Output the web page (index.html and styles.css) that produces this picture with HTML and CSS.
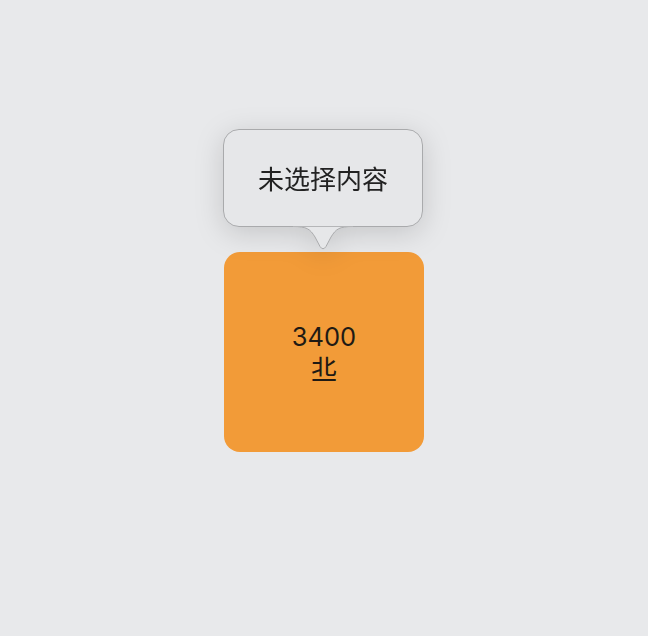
FILE: index.html
```html
<!DOCTYPE html>
<html lang="zh">
<head>
<meta charset="utf-8">
<link rel="stylesheet" href="styles.css">
</head>
<body>
<div class="stage">
  <div class="cell">
    <div class="tip">
      <div class="tip-body">
        <span class="tip-text">未选择内容</span>
      </div>
      <svg class="tip-arrow" width="60" height="26" viewBox="0 0 60 26">
        <path d="M0 0.5 C 14 0.5, 17 3, 22 11 L 27 20.5 Q 30 25 33 20.5 L 38 11 C 43 3, 46 0.5, 60 0.5 Z" fill="#e6e7e9" stroke="#a9aaac" stroke-width="1"/>
        <rect x="0" y="-2" width="60" height="2.2" fill="#e6e7e9"/>
      </svg>
    </div>
    <div class="cell-label">
      <div class="cell-value">3400</div>
      <div class="cell-char">丠</div>
    </div>
  </div>
</div>
</body>
</html>
```
FILE: styles.css
```css
html, body {
  margin: 0;
  padding: 0;
  background: #e8e9eb;
}
.stage {
  width: 648px;
  height: 636px;
  display: flex;
  justify-content: center;
  padding-top: 252px;
  box-sizing: border-box;
}
.cell {
  position: relative;
  width: 200px;
  height: 200px;
  border-radius: 16px;
  background: #f29b38;
  display: flex;
  align-items: center;
  justify-content: center;
}
.cell-label {
  font-family: "Inter", "Noto Sans CJK SC", sans-serif;
  color: #1f1a14;
  text-align: center;
  margin-top: 2px;
}
.cell-value {
  font-size: 25.5px;
  line-height: 31px;
}
.cell-char {
  font-family: "Noto Sans CJK SC", sans-serif;
  font-size: 27px;
  line-height: 33px;
}
.tip {
  position: absolute;
  left: -1px;
  top: -123px;
  width: 200px;
  height: 98px;
  filter: drop-shadow(0 6px 14px rgba(0, 0, 0, 0.15));
}
.tip-body {
  box-sizing: border-box;
  width: 200px;
  height: 98px;
  background: #e6e7e9;
  border: 1px solid #a9aaac;
  border-radius: 16px;
  display: flex;
  align-items: center;
  justify-content: center;
}
.tip-text {
  font-family: "Noto Sans CJK SC", sans-serif;
  font-size: 26px;
  color: #222222;
  margin-top: -2px;
}
.tip-arrow {
  position: absolute;
  left: 70px;
  top: 97px;
  overflow: visible;
}
```
